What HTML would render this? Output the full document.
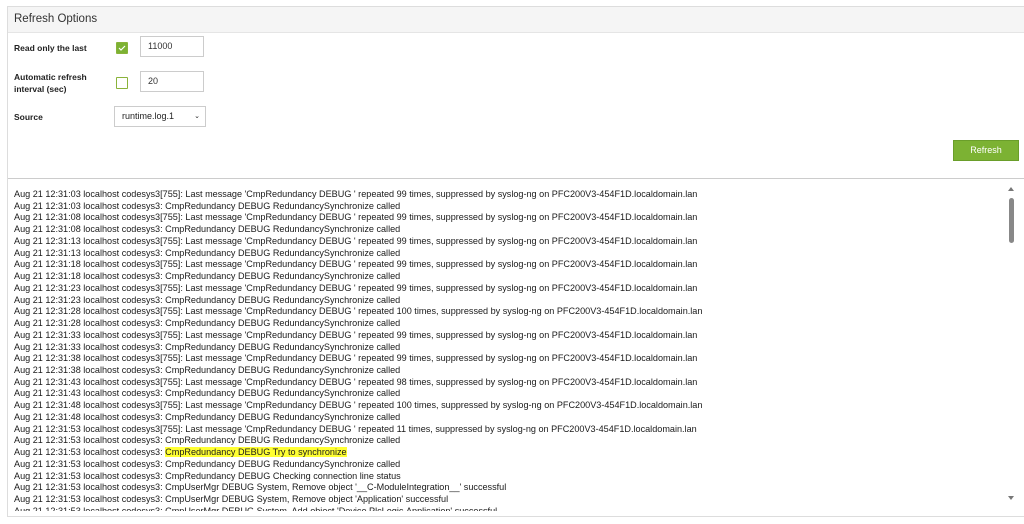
<!DOCTYPE html>
<html><head><style>
body{margin:0;background:#fff;font-family:"Liberation Sans",sans-serif;width:1024px;height:524px;overflow:hidden;position:relative}
.panel{position:absolute;left:7px;top:6px;width:1017px;height:511px;border:1px solid #ddd;border-right:none;box-sizing:border-box}
.hdr{position:absolute;left:0;top:0;right:0;height:25px;background:#f5f5f5;border-bottom:1px solid #e5e5e5;font-size:11.5px;color:#333;line-height:25px;padding-left:6px}
.lbl{position:absolute;left:6px;font-size:8.5px;font-weight:bold;color:#222;line-height:12px}
.cb{position:absolute;left:108px;width:10px;height:10px;border:1px solid #8ab33a;border-radius:1px}
.inp{position:absolute;left:132px;width:64px;height:21px;border:1px solid #ccc;box-sizing:border-box;font-size:9px;padding-left:7px;line-height:19px;color:#333}
.btn{position:absolute;left:945px;top:133px;width:66px;height:21px;background:#7cb233;border:1px solid #6a9e2a;box-sizing:border-box;color:#fff;font-size:9px;text-align:center;line-height:19px}
.sep{position:absolute;left:0;right:0;top:171px;border-top:1px solid #ccc}
.log{position:absolute;left:6px;top:182px;width:990px;height:322px;overflow:hidden;font-size:9.1px;line-height:11.73px;color:#1a1a1a;white-space:nowrap}
.hl{background:#ffff33}
.sb{position:absolute;left:1001px;top:191px;width:5px;height:45px;background:#888;border-radius:3px}
</style></head><body>
<div class="panel">
<div class="hdr">Refresh Options</div>
<div class="lbl" style="top:35px">Read only the last</div>
<div class="cb" style="top:35px;background:#7cb233"><svg width="10" height="10" style="position:absolute;left:0;top:0"><path d="M2 5l2 2 4-4" stroke="#fff" stroke-width="1.2" fill="none"/></svg></div>
<div class="inp" style="top:29px">11000</div>
<div class="lbl" style="top:64px">Automatic refresh<br>interval (sec)</div>
<div class="cb" style="top:70px"></div>
<div class="inp" style="top:64px">20</div>
<div class="lbl" style="top:104px">Source</div>
<div class="inp" style="top:99px;left:106px;width:92px;color:#222">runtime.log.1<span style="position:absolute;right:5px;font-size:7px">&#8964;</span></div>
<div class="btn">Refresh</div>
<div class="sep"></div>
<div class="log">Aug 21 12:31:03 localhost codesys3[755]: Last message 'CmpRedundancy DEBUG ' repeated 99 times, suppressed by syslog-ng on PFC200V3-454F1D.localdomain.lan<br>
Aug 21 12:31:03 localhost codesys3: CmpRedundancy DEBUG RedundancySynchronize called<br>
Aug 21 12:31:08 localhost codesys3[755]: Last message 'CmpRedundancy DEBUG ' repeated 99 times, suppressed by syslog-ng on PFC200V3-454F1D.localdomain.lan<br>
Aug 21 12:31:08 localhost codesys3: CmpRedundancy DEBUG RedundancySynchronize called<br>
Aug 21 12:31:13 localhost codesys3[755]: Last message 'CmpRedundancy DEBUG ' repeated 99 times, suppressed by syslog-ng on PFC200V3-454F1D.localdomain.lan<br>
Aug 21 12:31:13 localhost codesys3: CmpRedundancy DEBUG RedundancySynchronize called<br>
Aug 21 12:31:18 localhost codesys3[755]: Last message 'CmpRedundancy DEBUG ' repeated 99 times, suppressed by syslog-ng on PFC200V3-454F1D.localdomain.lan<br>
Aug 21 12:31:18 localhost codesys3: CmpRedundancy DEBUG RedundancySynchronize called<br>
Aug 21 12:31:23 localhost codesys3[755]: Last message 'CmpRedundancy DEBUG ' repeated 99 times, suppressed by syslog-ng on PFC200V3-454F1D.localdomain.lan<br>
Aug 21 12:31:23 localhost codesys3: CmpRedundancy DEBUG RedundancySynchronize called<br>
Aug 21 12:31:28 localhost codesys3[755]: Last message 'CmpRedundancy DEBUG ' repeated 100 times, suppressed by syslog-ng on PFC200V3-454F1D.localdomain.lan<br>
Aug 21 12:31:28 localhost codesys3: CmpRedundancy DEBUG RedundancySynchronize called<br>
Aug 21 12:31:33 localhost codesys3[755]: Last message 'CmpRedundancy DEBUG ' repeated 99 times, suppressed by syslog-ng on PFC200V3-454F1D.localdomain.lan<br>
Aug 21 12:31:33 localhost codesys3: CmpRedundancy DEBUG RedundancySynchronize called<br>
Aug 21 12:31:38 localhost codesys3[755]: Last message 'CmpRedundancy DEBUG ' repeated 99 times, suppressed by syslog-ng on PFC200V3-454F1D.localdomain.lan<br>
Aug 21 12:31:38 localhost codesys3: CmpRedundancy DEBUG RedundancySynchronize called<br>
Aug 21 12:31:43 localhost codesys3[755]: Last message 'CmpRedundancy DEBUG ' repeated 98 times, suppressed by syslog-ng on PFC200V3-454F1D.localdomain.lan<br>
Aug 21 12:31:43 localhost codesys3: CmpRedundancy DEBUG RedundancySynchronize called<br>
Aug 21 12:31:48 localhost codesys3[755]: Last message 'CmpRedundancy DEBUG ' repeated 100 times, suppressed by syslog-ng on PFC200V3-454F1D.localdomain.lan<br>
Aug 21 12:31:48 localhost codesys3: CmpRedundancy DEBUG RedundancySynchronize called<br>
Aug 21 12:31:53 localhost codesys3[755]: Last message 'CmpRedundancy DEBUG ' repeated 11 times, suppressed by syslog-ng on PFC200V3-454F1D.localdomain.lan<br>
Aug 21 12:31:53 localhost codesys3: CmpRedundancy DEBUG RedundancySynchronize called<br>
Aug 21 12:31:53 localhost codesys3: <span class="hl">CmpRedundancy DEBUG Try to synchronize </span><br>
Aug 21 12:31:53 localhost codesys3: CmpRedundancy DEBUG RedundancySynchronize called<br>
Aug 21 12:31:53 localhost codesys3: CmpRedundancy DEBUG Checking connection line status<br>
Aug 21 12:31:53 localhost codesys3: CmpUserMgr DEBUG System, Remove object '__C-ModuleIntegration__' successful<br>
Aug 21 12:31:53 localhost codesys3: CmpUserMgr DEBUG System, Remove object 'Application' successful<br>
Aug 21 12:31:53 localhost codesys3: CmpUserMgr DEBUG System, Add object 'Device.PlcLogic.Application' successful</div>
<div style="position:absolute;left:1000px;top:180px;border:3px solid transparent;border-bottom:4px solid #777;border-top:none"></div>
<div class="sb"></div>
<div style="position:absolute;left:1000px;top:489px;border:3px solid transparent;border-top:4px solid #777;border-bottom:none"></div>
</div>
</body></html>
